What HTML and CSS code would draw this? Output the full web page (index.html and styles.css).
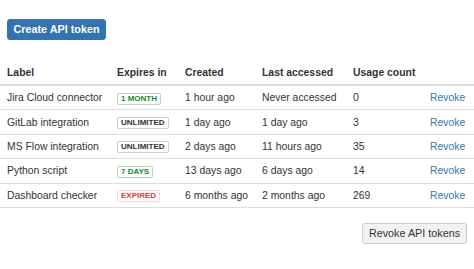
FILE: index.html
```html
<!DOCTYPE html>
<html lang="en">
<head>
<meta charset="utf-8">
<title>API tokens</title>
<link rel="stylesheet" href="styles.css">
</head>
<body>
<main class="tokens">
  <div class="toolbar">
    <button class="btn btn-primary" type="button">Create API token</button>
  </div>
  <table class="token-table">
    <colgroup>
      <col class="c-label"><col class="c-expires"><col class="c-created"><col class="c-accessed"><col class="c-usage"><col class="c-action">
    </colgroup>
    <thead>
      <tr>
        <th>Label</th>
        <th>Expires in</th>
        <th>Created</th>
        <th>Last accessed</th>
        <th>Usage count</th>
        <th></th>
      </tr>
    </thead>
    <tbody>
      <tr>
        <td>Jira Cloud connector</td>
        <td><span class="lozenge lozenge-success">1 month</span></td>
        <td>1 hour ago</td>
        <td>Never accessed</td>
        <td>0</td>
        <td><a class="link" href="#">Revoke</a></td>
      </tr>
      <tr>
        <td>GitLab integration</td>
        <td><span class="lozenge lozenge-default">Unlimited</span></td>
        <td>1 day ago</td>
        <td>1 day ago</td>
        <td>3</td>
        <td><a class="link" href="#">Revoke</a></td>
      </tr>
      <tr>
        <td>MS Flow integration</td>
        <td><span class="lozenge lozenge-default">Unlimited</span></td>
        <td>2 days ago</td>
        <td>11 hours ago</td>
        <td>35</td>
        <td><a class="link" href="#">Revoke</a></td>
      </tr>
      <tr>
        <td>Python script</td>
        <td><span class="lozenge lozenge-success">7 days</span></td>
        <td>13 days ago</td>
        <td>6 days ago</td>
        <td>14</td>
        <td><a class="link" href="#">Revoke</a></td>
      </tr>
      <tr>
        <td>Dashboard checker</td>
        <td><span class="lozenge lozenge-error">Expired</span></td>
        <td>6 months ago</td>
        <td>2 months ago</td>
        <td>269</td>
        <td><a class="link" href="#">Revoke</a></td>
      </tr>
    </tbody>
  </table>
  <div class="footer">
    <button class="btn btn-default" type="button">Revoke API tokens</button>
  </div>
</main>
</body>
</html>
```

FILE: styles.css
```css
html, body {
  margin: 0;
  padding: 0;
  background: #fff;
}

body {
  font-family: "Liberation Sans", Arial, sans-serif;
  font-size: 10.4px;
  color: #333;
}

.tokens {
  width: 474px;
}

.toolbar {
  display: flex;
  padding: 19px 7px 0;
}

.btn {
  font-family: inherit;
  line-height: 13px;
  border-radius: 3px;
  white-space: nowrap;
  cursor: pointer;
}

.btn-primary {
  background: #3572b0;
  border: 1px solid #3572b0;
  color: #fff;
  font-size: 10.8px;
  font-weight: bold;
  height: 21px;
  width: 99px;
  padding: 0;
}

.btn-default {
  background: #f2f2f2;
  border: 1px solid #ccc;
  color: #333;
  font-size: 10.8px;
  height: 21px;
  width: 105px;
  padding: 0;
}

.token-table {
  width: 474px;
  margin-top: 21px;
  border-collapse: collapse;
  table-layout: fixed;
}

.c-label { width: 110px; }
.c-expires { width: 68px; }
.c-created { width: 77px; }
.c-accessed { width: 91px; }
.c-usage { width: 77px; }
.c-action { width: 51px; }

.token-table th,
.token-table td {
  padding: 0 7px;
  text-align: left;
  white-space: nowrap;
  line-height: 13px;
}

.token-table th {
  font-weight: bold;
  height: 23px;
  border-bottom: 2px solid #ddd;
}

.token-table td {
  height: 23.4px;
  border-bottom: 1px solid #ddd;
}

.lozenge {
  display: inline-block;
  font-size: 8px;
  font-weight: bold;
  line-height: 10px;
  text-transform: uppercase;
  letter-spacing: 0;
  padding: 0 3px;
  border: 1px solid;
  border-radius: 2px;
  vertical-align: 0;
}

.lozenge-success {
  color: #14892c;
  border-color: #b2d8b9;
}

.lozenge-default {
  color: #333;
  border-color: #ccc;
}

.lozenge-error {
  color: #d04437;
  border-color: #f8d3d1;
}

.link {
  color: #3b73af;
  text-decoration: none;
}

.footer {
  display: flex;
  justify-content: flex-end;
  padding: 15px 7px 0;
}
```
